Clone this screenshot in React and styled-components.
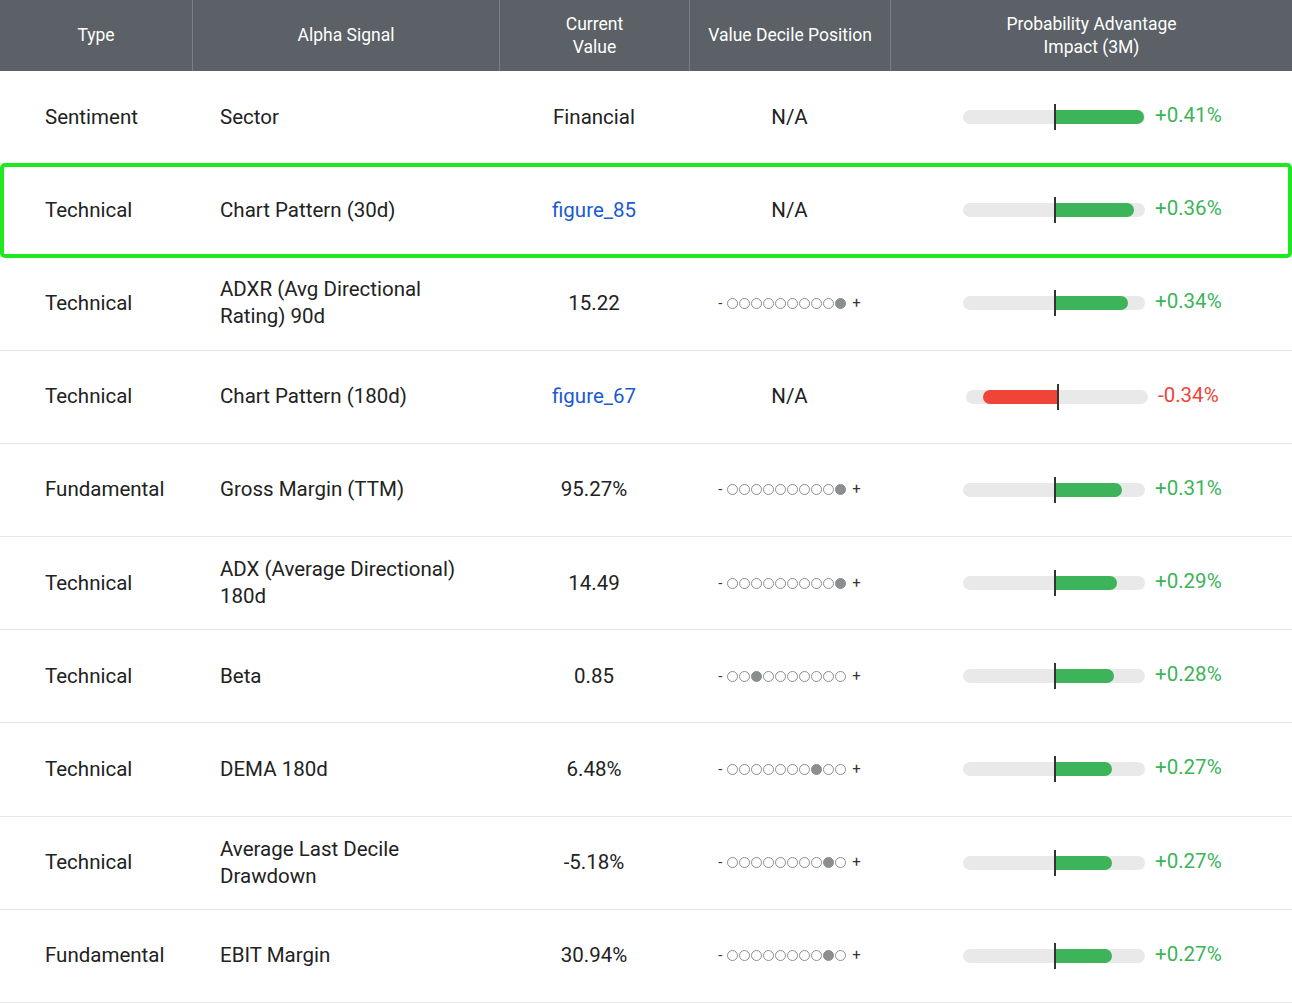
import React from "react";
import styled, { createGlobalStyle } from "styled-components";

const Global = createGlobalStyle`
  body { margin: 0; font-family: Roboto, "Liberation Sans", sans-serif; background: #fff; }
`;

const cols = "192px 307px 190px 201px 1fr";

const Header = styled.div`
  display: grid;
  grid-template-columns: ${cols};
  height: 71px;
  background: #5b6166;
  color: #fff;
  font-size: 17.5px;
  line-height: 23px;
`;

const HeadCell = styled.div`
  display: flex;
  align-items: center;
  justify-content: center;
  text-align: center;
  border-left: ${(p) => (p.first ? "none" : "1px solid #7b8085")};
`;

const Row = styled.div`
  position: relative;
  display: grid;
  grid-template-columns: ${cols};
  height: 93.2px;
  box-sizing: border-box;
  border-bottom: 1px solid #e6e6e6;
  font-size: 20.5px;
  color: #222;
  ${(p) =>
    p.highlight &&
    `&::after {
      content: "";
      position: absolute;
      left: 0; right: 0; top: -1px; bottom: -2px;
      border: 4px solid #1ee81e;
      border-radius: 5px;
      pointer-events: none;
    }`}
`;

const Cell = styled.div`
  display: flex;
  align-items: center;
  line-height: 27px;
  padding-left: ${(p) => p.pad || 0}px;
  justify-content: ${(p) => (p.center ? "center" : "flex-start")};
  color: ${(p) => (p.link ? "#1a5bd0" : "inherit")};
`;

const Decile = styled.div`
  display: flex;
  align-items: center;
  gap: 1px;
  font-size: 15px;
  color: #333;
`;

const Dot = styled.span`
  width: 11px;
  height: 11px;
  border-radius: 50%;
  box-sizing: border-box;
  border: 1px solid #8a8e91;
  background: ${(p) => (p.on ? "#8a8e91" : "#fff")};
`;

const BarWrap = styled.div`
  display: flex;
  align-items: center;
  padding-left: ${(p) => (p.neg ? 76 : 73)}px;
  gap: 10px;
`;

const Track = styled.div`
  position: relative;
  width: 182px;
  height: 14px;
  border-radius: 7px;
  background: #e9e9e9;
`;

const Fill = styled.div`
  position: absolute;
  top: 0;
  height: 14px;
  background: ${(p) => (p.neg ? "#f04438" : "#3db35a")};
  border-radius: ${(p) => (p.neg ? "7px 0 0 7px" : "0 7px 7px 0")};
`;

const Tick = styled.div`
  position: absolute;
  left: 91px;
  top: -6px;
  width: 2px;
  height: 26px;
  background: #333;
`;

const Pct = styled.span`
  font-size: 20.5px;
  color: ${(p) => (p.neg ? "#f04438" : "#3db35a")};
  margin-top: -4px;
`;

const rows = [
  ["Sentiment", "Sector", "Financial", null, 0.41],
  ["Technical", "Chart Pattern (30d)", "figure_85", null, 0.36, true],
  ["Technical", "ADXR (Avg Directional Rating) 90d", "15.22", 9, 0.34],
  ["Technical", "Chart Pattern (180d)", "figure_67", null, -0.34, true],
  ["Fundamental", "Gross Margin (TTM)", "95.27%", 9, 0.31],
  ["Technical", "ADX (Average Directional) 180d", "14.49", 9, 0.29],
  ["Technical", "Beta", "0.85", 2, 0.28],
  ["Technical", "DEMA 180d", "6.48%", 7, 0.27],
  ["Technical", "Average Last Decile Drawdown", "-5.18%", 8, 0.27],
  ["Fundamental", "EBIT Margin", "30.94%", 8, 0.27],
];

const widths = { 0.41: 90, 0.36: 80, 0.34: 74, 0.31: 68, 0.29: 63, 0.28: 60, 0.27: 58 };

export default function App() {
  return (
    <>
      <Global />
      <Header>
        <HeadCell first>Type</HeadCell>
        <HeadCell>Alpha Signal</HeadCell>
        <HeadCell>Current<br />Value</HeadCell>
        <HeadCell>Value Decile Position</HeadCell>
        <HeadCell>Probability Advantage<br />Impact (3M)</HeadCell>
      </Header>
      {rows.map(([type, sig, val, dec, imp, link], i) => {
        const neg = imp < 0;
        const w = widths[Math.abs(imp)];
        return (
          <Row key={i} highlight={i === 1}>
            <Cell pad={45}>{type}</Cell>
            <Cell pad={28} style={{ maxWidth: 250 }}>{sig}</Cell>
            <Cell center link={link}>{val}</Cell>
            <Cell center>
              {dec === null ? (
                "N/A"
              ) : (
                <Decile>
                  <span style={{ marginRight: 4 }}>-</span>
                  {Array.from({ length: 10 }).map((_, k) => (
                    <Dot key={k} on={k === dec} />
                  ))}
                  <span style={{ marginLeft: 5 }}>+</span>
                </Decile>
              )}
            </Cell>
            <BarWrap neg={neg}>
              <Track>
                <Fill neg={neg} style={neg ? { left: 91 - w, width: w } : { left: 91, width: w }} />
                <Tick />
              </Track>
              <Pct neg={neg}>{neg ? "" : "+"}{imp.toFixed(2)}%</Pct>
            </BarWrap>
          </Row>
        );
      })}
    </>
  );
}
